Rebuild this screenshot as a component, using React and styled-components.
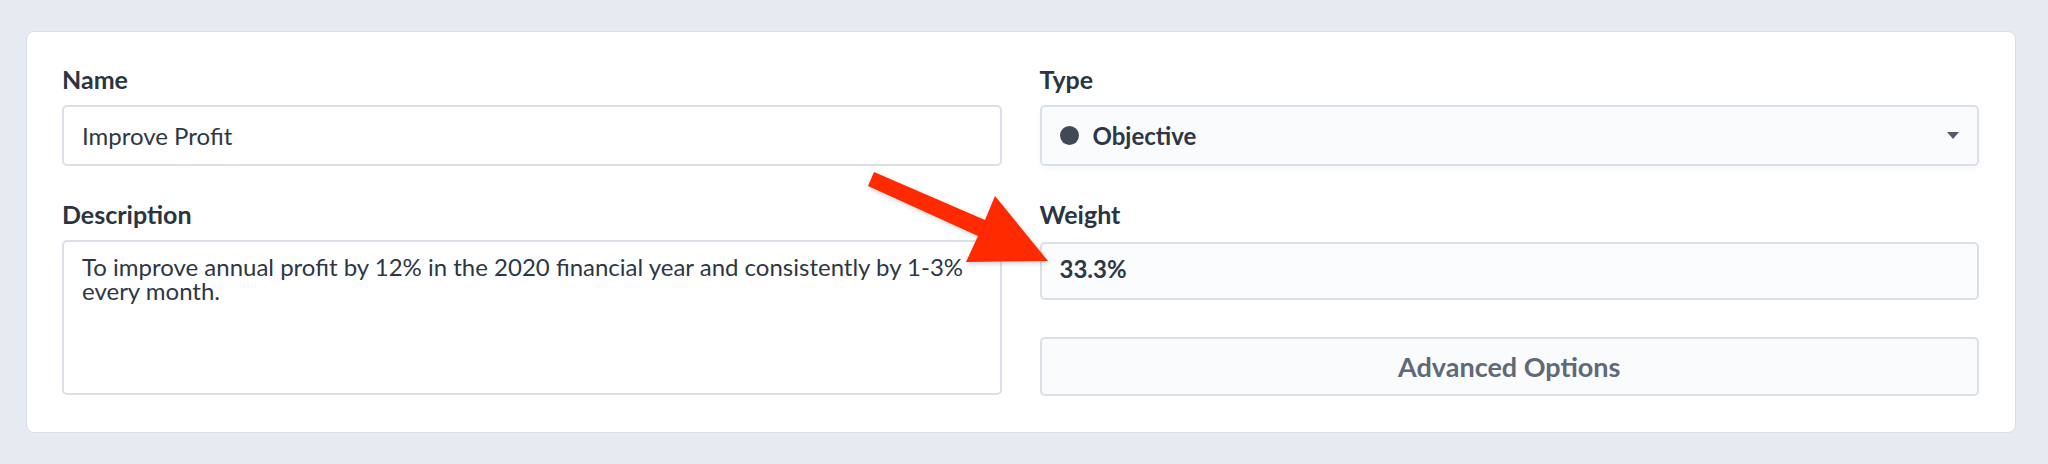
import React from "react";
import styled, { createGlobalStyle } from "styled-components";

const GlobalStyle = createGlobalStyle`
  html, body {
    margin: 0;
    padding: 0;
    background: #e6eaf1;
  }
  body {
    width: 2048px;
    height: 464px;
    overflow: hidden;
    font-family: Lato, "Liberation Sans", sans-serif;
    -webkit-font-smoothing: antialiased;
  }
  * { box-sizing: border-box; }
`;

const Page = styled.div`
  position: relative;
  width: 2048px;
  height: 464px;
  padding: 31px 32px 0 26px;
`;

const Card = styled.div`
  background: #ffffff;
  border: 1px solid #d9dee7;
  border-radius: 8px;
  padding: 32px 36px 36px 35px;
  display: grid;
  grid-template-columns: 1fr 1fr;
  column-gap: 38px;
  align-items: start;
`;

const Column = styled.div`
  display: flex;
  flex-direction: column;
  gap: 33px;
`;

const Field = styled.div`
  display: flex;
  flex-direction: column;
  gap: ${(p) => p.$gap ?? 11}px;
`;

const Label = styled.label`
  font-size: 25px;
  line-height: 30px;
  font-weight: 700;
  color: #2b3441;
`;

const TextInput = styled.input`
  width: 100%;
  height: ${(p) => p.$height ?? 61}px;
  padding: 0 18px ${(p) => p.$shift ?? 0}px;
  border: 2px solid #dbe0e8;
  border-radius: 5px;
  background: ${(p) => (p.$muted ? "#fbfcfd" : "#ffffff")};
  font-family: inherit;
  font-size: 24px;
  font-weight: ${(p) => (p.$bold ? 700 : 400)};
  color: #2d3745;
  outline: none;
`;

const TextArea = styled.textarea`
  width: 100%;
  height: 155px;
  padding: 13px 18px;
  border: 2px solid #dbe0e8;
  border-radius: 5px;
  background: #ffffff;
  font-family: inherit;
  font-size: 24px;
  line-height: 24px;
  color: #2d3745;
  resize: none;
  outline: none;
  display: block;
`;

const SelectBox = styled.div`
  height: 61px;
  display: flex;
  align-items: center;
  gap: 14px;
  padding: 0 18px 0 18px;
  border: 2px solid #dbe0e8;
  border-radius: 5px;
  background: #fafbfc;
  box-shadow: 0 3px 6px rgba(30, 40, 60, 0.04);
`;

const Dot = styled.span`
  width: 19px;
  height: 19px;
  border-radius: 50%;
  background: #404956;
  flex: none;
`;

const SelectText = styled.span`
  font-size: 24px;
  line-height: 30px;
  font-weight: 700;
  color: #2d3745;
`;

const Caret = styled.span`
  margin-left: auto;
  width: 0;
  height: 0;
  border-left: 6.5px solid transparent;
  border-right: 6.5px solid transparent;
  border-top: 7px solid #535b69;
`;

const OptionsButton = styled.button`
  margin-top: 24px;
  width: 100%;
  height: 59px;
  border: 2px solid #dbe0e8;
  border-radius: 5px;
  background: #fafbfc;
  font-family: inherit;
  font-size: 27px;
  font-weight: 700;
  color: #5f6977;
  cursor: pointer;
`;

const ArrowSvg = styled.svg`
  position: absolute;
  left: 860px;
  top: 165px;
  width: 195px;
  height: 105px;
  overflow: visible;
  pointer-events: none;
  filter: drop-shadow(1px 2px 2px rgba(0, 0, 0, 0.18));
`;

function Arrow() {
  return (
    <ArrowSvg viewBox="0 0 195 105">
      <polygon
        points="14,7 125,55 135,31 188,96 106,97 118,71 8,21"
        fill="#ff2a00"
      />
    </ArrowSvg>
  );
}

export default function App() {
  return (
    <>
      <GlobalStyle />
      <Page>
        <Card>
          <Column>
            <Field>
              <Label>Name</Label>
              <TextInput readOnly value="Improve Profit" />
            </Field>
            <Field>
              <Label>Description</Label>
              <TextArea
                readOnly
                value="To improve annual profit by 12% in the 2020 financial year and consistently by 1-3% every month."
              />
            </Field>
          </Column>
          <Column>
            <Field>
              <Label>Type</Label>
              <SelectBox>
                <Dot />
                <SelectText>Objective</SelectText>
                <Caret />
              </SelectBox>
            </Field>
            <Field $gap={13}>
              <Label>Weight</Label>
              <TextInput readOnly value="33.3%" $bold $muted $height={58} $shift={6} />
              <OptionsButton type="button">Advanced Options</OptionsButton>
            </Field>
          </Column>
        </Card>
        <Arrow />
      </Page>
    </>
  );
}
